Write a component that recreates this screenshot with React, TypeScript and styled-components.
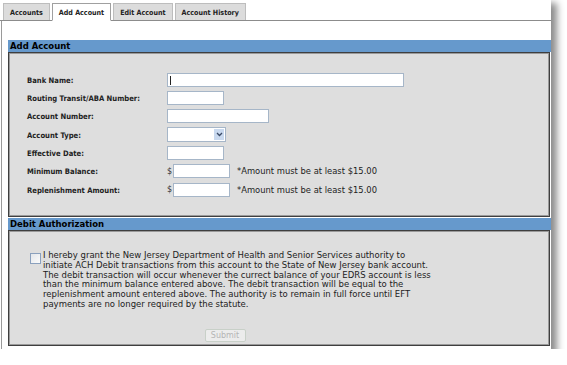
import React from 'react';
import styled, { createGlobalStyle } from 'styled-components';

const GlobalStyle = createGlobalStyle`
  html, body {
    margin: 0;
    padding: 0;
    background: #ffffff;
  }
  body {
    font-family: "DejaVu Sans", Verdana, sans-serif;
    color: #000;
  }
`;

const boldFont = '"DejaVu Sans Condensed", "DejaVu Sans", Verdana, sans-serif';

const Window = styled.div`
  width: 551px;
  height: 349px;
  background: #fff;
  box-shadow: 4px 5px 7px 2px rgba(0, 0, 0, 0.45);
  display: flex;
  flex-direction: column;
  box-sizing: border-box;
  padding-top: 3px;
`;

const TabBar = styled.div`
  display: flex;
  align-items: flex-end;
  gap: 2px;
  padding-left: 3px;
  border-bottom: 1px solid #8c8c8c;
  height: 18px;
`;

const Tab = styled.div<{ $active?: boolean }>`
  height: ${(p) => (p.$active ? '18px' : '17px')};
  box-sizing: border-box;
  margin-bottom: ${(p) => (p.$active ? '-1px' : '0')};
  padding: 0 6px;
  display: flex;
  align-items: center;
  font-family: ${boldFont};
  font-size: 7.1px;
  font-weight: bold;
  color: #222;
  background: ${(p) => (p.$active ? '#fff' : '#dcdcdc')};
  border: 1px solid ${(p) => (p.$active ? '#a0a0a0' : '#bdbdbd')};
  border-bottom: ${(p) => (p.$active ? '1px solid #fff' : 'none')};
`;

const Content = styled.div`
  flex: 1;
  margin-left: 1px;
  border-left: 1px solid #9a9a9a;
  padding: 19px 1px 4px 6px;
  display: flex;
  flex-direction: column;
`;

const SectionHeader = styled.div`
  height: 12px;
  background: #6699cc;
  font-size: 8.5px;
  font-weight: bold;
  line-height: 12px;
  padding-left: 2px;
  margin-right: -1px;
`;

const Panel = styled.div<{ $h: number }>`
  height: ${(p) => p.$h}px;
  box-sizing: border-box;
  background: #dedede;
  border: 1px solid #3f3f3f;
  box-shadow: inset 0 0 0 1px #9a9a9a;
  margin-bottom: 1px;
`;

const FormGrid = styled.div`
  display: grid;
  grid-template-columns: 140px auto;
  grid-auto-rows: 15px;
  row-gap: 3.35px;
  padding: 19px 0 0 18px;
  align-items: center;
`;

const Label = styled.div`
  font-family: ${boldFont};
  font-size: 7.6px;
  font-weight: bold;
  color: #222;
  line-height: 15px;
  padding-top: 1px;
`;

const FieldCell = styled.div`
  display: flex;
  align-items: center;
  height: 15px;
`;

const TextInput = styled.input<{ $w: number; $caret?: boolean }>`
  width: ${(p) => p.$w}px;
  height: 14px;
  box-sizing: border-box;
  border: 1px solid #a6b6c8;
  background: #fff;
  padding: 0;
  margin: 0;
  outline: none;
  ${(p) =>
    p.$caret
      ? 'background: linear-gradient(#222, #222) no-repeat 2px 2px / 1px 9px, #fff;'
      : ''}
`;

const Dollar = styled.span`
  font-size: 8px;
  color: #333;
  width: 6px;
`;

const Note = styled.span`
  font-size: 8.4px;
  color: #222;
  margin-left: 7px;
`;

const SelectBox = styled.div`
  position: relative;
  width: 59px;
  height: 15px;
  box-sizing: border-box;
  border: 1px solid #a6b6c8;
  background: #fff;
`;

const SelectArrow = styled.div`
  position: absolute;
  right: 1px;
  top: 1px;
  bottom: 1px;
  width: 10px;
  background: #c9d9ef;
  display: flex;
  align-items: center;
  justify-content: center;
`;

const AuthBody = styled.div`
  display: flex;
  padding: 20px 0 0 21px;
  gap: 2px;
`;

const CheckBox = styled.div`
  width: 11px;
  height: 11px;
  box-sizing: border-box;
  border: 1px solid #8aa0bd;
  background: linear-gradient(135deg, #e3e6ea, #fbfbfb);
  margin-top: 2px;
  flex-shrink: 0;
`;

const AuthText = styled.div`
  width: 400px;
  font-size: 8.5px;
  line-height: 9.8px;
  color: #222;
  white-space: nowrap;
`;

const ButtonRow = styled.div`
  display: flex;
  justify-content: center;
  width: 364px;
  margin: 19px 0 0 34px;
`;

const SubmitButton = styled.button`
  width: 41px;
  height: 13px;
  padding: 0;
  font-family: inherit;
  font-size: 8px;
  color: #b5b5b5;
  background: #ececec;
  border: 1px solid #c8d0c8;
  border-radius: 2px;
`;

const Chevron = () => (
  <svg width="7" height="5" viewBox="0 0 7 5">
    <path d="M1 1 L3.5 3.5 L6 1" fill="none" stroke="#3b4a66" strokeWidth="1.3" />
  </svg>
);

const App = (): JSX.Element => (
  <>
    <GlobalStyle />
    <Window>
      <TabBar>
        <Tab>Accounts</Tab>
        <Tab $active>Add Account</Tab>
        <Tab>Edit Account</Tab>
        <Tab>Account History</Tab>
      </TabBar>
      <Content>
        <SectionHeader>Add Account</SectionHeader>
        <Panel $h={165}>
          <FormGrid>
            <Label>Bank Name:</Label>
            <FieldCell><TextInput $w={237} $caret /></FieldCell>
            <Label>Routing Transit/ABA Number:</Label>
            <FieldCell><TextInput $w={57} /></FieldCell>
            <Label>Account Number:</Label>
            <FieldCell><TextInput $w={102} /></FieldCell>
            <Label>Account Type:</Label>
            <FieldCell>
              <SelectBox>
                <SelectArrow><Chevron /></SelectArrow>
              </SelectBox>
            </FieldCell>
            <Label>Effective Date:</Label>
            <FieldCell><TextInput $w={57} /></FieldCell>
            <Label>Minimum Balance:</Label>
            <FieldCell>
              <Dollar>$</Dollar>
              <TextInput $w={57} />
              <Note>*Amount must be at least $15.00</Note>
            </FieldCell>
            <Label>Replenishment Amount:</Label>
            <FieldCell>
              <Dollar>$</Dollar>
              <TextInput $w={57} />
              <Note>*Amount must be at least $15.00</Note>
            </FieldCell>
          </FormGrid>
        </Panel>
        <SectionHeader>Debit Authorization</SectionHeader>
        <Panel $h={116}>
          <AuthBody>
            <CheckBox />
            <AuthText>
              I hereby grant the New Jersey Department of Health and Senior Services authority to<br />
              initiate ACH Debit transactions from this account to the State of New Jersey bank account.<br />
              The debit transaction will occur whenever the currect balance of your EDRS account is less<br />
              than the minimum balance entered above. The debit transaction will be equal to the<br />
              replenishment amount entered above. The authority is to remain in full force until EFT<br />
              payments are no longer required by the statute.
            </AuthText>
          </AuthBody>
          <ButtonRow>
            <SubmitButton disabled>Submit</SubmitButton>
          </ButtonRow>
        </Panel>
      </Content>
    </Window>
  </>
);

export default App;
